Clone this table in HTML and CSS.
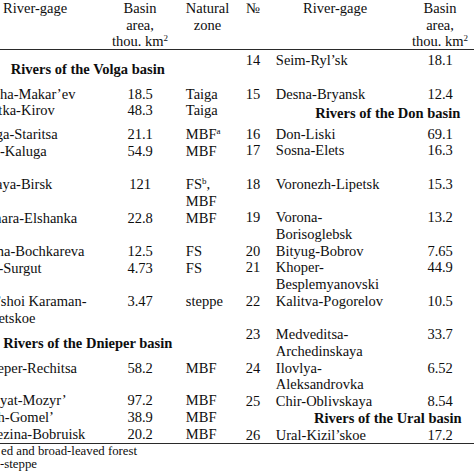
FILE: index.html
```html
<!DOCTYPE html>
<html>
<head>
<meta charset="utf-8">
<link rel="stylesheet" href="styles.css">
</head>
<body>
<div class="page">
  <div class="table">
    <div class="head">
      <div class="half">
        <div class="c-no">№</div>
        <div class="c-name h-name">River-gage</div>
        <div class="c-area">Basin<br>area,<br>thou. km<sup>2</sup></div>
        <div class="c-zone"><span class="h-zone">Natural<br>zone</span></div>
      </div>
      <div class="half">
        <div class="c-no">№</div>
        <div class="c-name h-name">River-gage</div>
        <div class="c-area">Basin<br>area,<br>thou. km<sup>2</sup></div>
        <div class="c-zone"><span class="h-zone">Natural<br>zone</span></div>
      </div>
    </div>
    <div class="body">
      <div class="half stack">
        <div class="group mt-11">Rivers of the Volga basin</div>
        <div class="row mt-8"><div class="c-no">1</div><div class="c-name">Unzha-Makar’ev</div><div class="c-area">18.5</div><div class="c-zone">Taiga</div></div>
        <div class="row"><div class="c-no">2</div><div class="c-name">Vyatka-Kirov</div><div class="c-area">48.3</div><div class="c-zone">Taiga</div></div>
        <div class="row mt-7"><div class="c-no">3</div><div class="c-name">Volga-Staritsa</div><div class="c-area">21.1</div><div class="c-zone">MBF<sup>a</sup></div></div>
        <div class="row"><div class="c-no">4</div><div class="c-name">Oka-Kaluga</div><div class="c-area">54.9</div><div class="c-zone">MBF</div></div>
        <div class="row mt-line"><div class="c-no">5</div><div class="c-name">Belaya-Birsk</div><div class="c-area">121</div><div class="c-zone">FS<sup>b</sup>,<br>MBF</div></div>
        <div class="row"><div class="c-no">6</div><div class="c-name">Samara-Elshanka</div><div class="c-area">22.8</div><div class="c-zone">MBF</div></div>
        <div class="row mt-line"><div class="c-no">7</div><div class="c-name">Kama-Bochkareva</div><div class="c-area">12.5</div><div class="c-zone">FS</div></div>
        <div class="row"><div class="c-no">8</div><div class="c-name">Sok-Surgut</div><div class="c-area">4.73</div><div class="c-zone">FS</div></div>
        <div class="row mt-line"><div class="c-no">9</div><div class="c-name">Bol’shoi Karaman-Sovetskoe</div><div class="c-area">3.47</div><div class="c-zone">steppe</div></div>
        <div class="group mt-8h">Rivers of the Dnieper basin</div>
        <div class="row mt-8"><div class="c-no">10</div><div class="c-name">Dnieper-Rechitsa</div><div class="c-area">58.2</div><div class="c-zone">MBF</div></div>
        <div class="row mt-15"><div class="c-no">11</div><div class="c-name">Pripyat-Mozyr’</div><div class="c-area">97.2</div><div class="c-zone">MBF</div></div>
        <div class="row"><div class="c-no">12</div><div class="c-name">Sozh-Gomel’</div><div class="c-area">38.9</div><div class="c-zone">MBF</div></div>
        <div class="row"><div class="c-no">13</div><div class="c-name">Berezina-Bobruisk</div><div class="c-area">20.2</div><div class="c-zone">MBF</div></div>
      </div>
      <div class="half stack">
        <div class="row mt-2"><div class="c-no">14</div><div class="c-name">Seim-Ryl’sk</div><div class="c-area">18.1</div><div class="c-zone">FS</div></div>
        <div class="row mt-17"><div class="c-no">15</div><div class="c-name">Desna-Bryansk</div><div class="c-area">12.4</div><div class="c-zone">MBF</div></div>
        <div class="group mt-2">Rivers of the Don basin</div>
        <div class="row mt-4"><div class="c-no">16</div><div class="c-name">Don-Liski</div><div class="c-area">69.1</div><div class="c-zone">FS</div></div>
        <div class="row"><div class="c-no">17</div><div class="c-name">Sosna-Elets</div><div class="c-area">16.3</div><div class="c-zone">FS</div></div>
        <div class="row mt-line"><div class="c-no">18</div><div class="c-name">Voronezh-Lipetsk</div><div class="c-area">15.3</div><div class="c-zone">FS</div></div>
        <div class="row mt-line"><div class="c-no">19</div><div class="c-name">Vorona-Borisoglebsk</div><div class="c-area">13.2</div><div class="c-zone">FS</div></div>
        <div class="row"><div class="c-no">20</div><div class="c-name">Bityug-Bobrov</div><div class="c-area">7.65</div><div class="c-zone">FS</div></div>
        <div class="row"><div class="c-no">21</div><div class="c-name">Khoper-Besplemyanovski</div><div class="c-area">44.9</div><div class="c-zone">FS</div></div>
        <div class="row"><div class="c-no">22</div><div class="c-name">Kalitva-Pogorelov</div><div class="c-area">10.5</div><div class="c-zone">steppe</div></div>
        <div class="row mt-line"><div class="c-no">23</div><div class="c-name">Medveditsa-Archedinskaya</div><div class="c-area">33.7</div><div class="c-zone">steppe</div></div>
        <div class="row"><div class="c-no">24</div><div class="c-name">Ilovlya-Aleksandrovka</div><div class="c-area">6.52</div><div class="c-zone">steppe</div></div>
        <div class="row"><div class="c-no">25</div><div class="c-name">Chir-Oblivskaya</div><div class="c-area">8.54</div><div class="c-zone">steppe</div></div>
        <div class="group">Rivers of the Ural basin</div>
        <div class="row"><div class="c-no">26</div><div class="c-name">Ural-Kizil’skoe</div><div class="c-area">17.2</div><div class="c-zone">steppe</div></div>
      </div>
    </div>
  </div>
  <div class="foot">
    <div>ed and broad-leaved forest</div>
    <div class="foot-b">-steppe</div>
  </div>
</div>
</body>
</html>
```
FILE: styles.css
```css
html, body {
  margin: 0;
  padding: 0;
  background: #ffffff;
}
.page {
  width: 474px;
  height: 474px;
  overflow: hidden;
  background: #ffffff;
  color: #0e0e0e;
  font-family: "Liberation Serif", "Times New Roman", serif;
  font-size: 14.5px;
  line-height: 16.72px;
}
.table {
  width: 600px;
  margin-left: -54.2px;
  display: flex;
  flex-direction: column;
}
.head {
  display: flex;
  height: 49px;
  border-bottom: 1px solid #2a2a2a;
}
.half {
  width: 300px;
  flex: none;
  display: flex;
}
.stack {
  flex-direction: column;
}
.body {
  display: flex;
  height: 392.6px;
  border-bottom: 1px solid #2a2a2a;
  align-items: flex-start;
}
.row {
  display: flex;
  align-items: flex-start;
}
.c-no {
  width: 30px;
  flex: none;
}
.c-name {
  width: 118.5px;
  flex: none;
}
.h-name {
  text-align: center;
}
.c-area {
  width: 91.5px;
  flex: none;
  text-align: center;
}
.c-zone {
  width: 60px;
  flex: none;
}
.h-zone {
  display: inline-block;
  text-align: center;
}
.group {
  margin-left: 30px;
  width: 224px;
  text-align: center;
  font-weight: bold;
  white-space: nowrap;
}
sup {
  font-size: 9px;
  line-height: 0;
  vertical-align: 5px;
}
.mt-2 { margin-top: 2px; }
.mt-4 { margin-top: 3.9px; }
.mt-7 { margin-top: 7px; }
.mt-8 { margin-top: 8px; }
.mt-8h { margin-top: 8.5px; }
.mt-11 { margin-top: 11px; }
.mt-15 { margin-top: 15.6px; }
.mt-17 { margin-top: 17.6px; }
.mt-line { margin-top: 16.72px; }
.foot {
  padding-left: 1px;
  margin-top: 1.4px;
  font-size: 12.8px;
  line-height: 13.4px;
}
.foot-b {
  margin-left: -1px;
}
```
